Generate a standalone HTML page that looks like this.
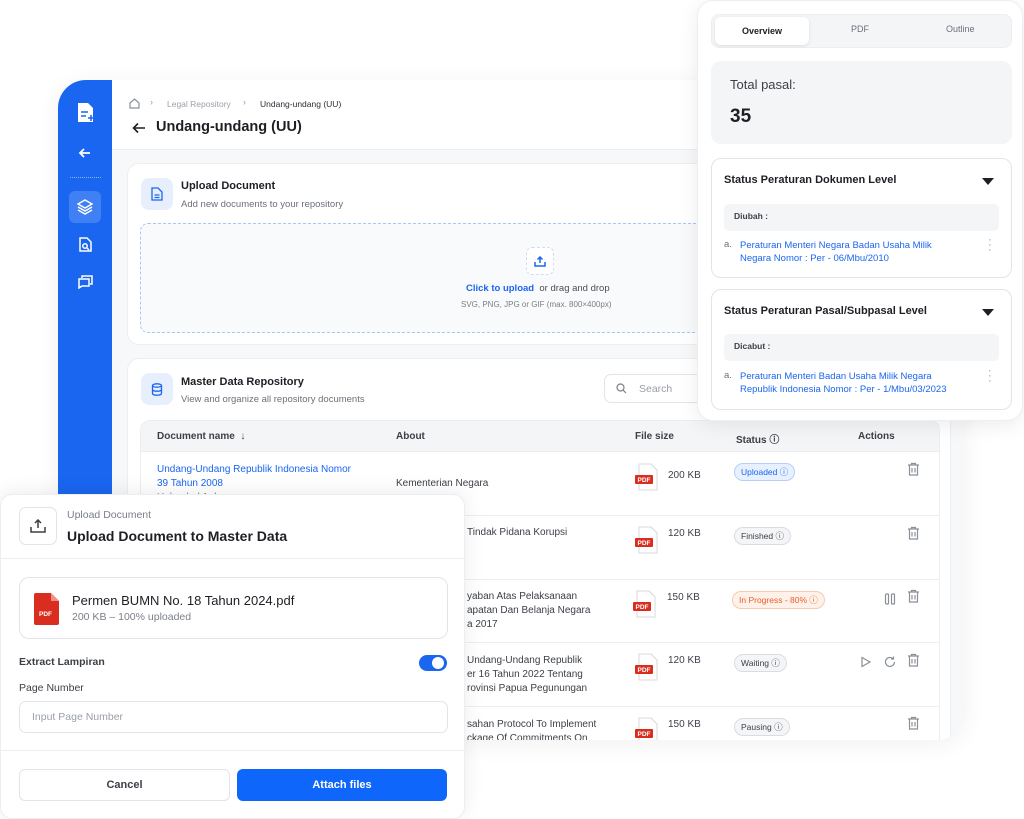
<!DOCTYPE html>
<html><head><meta charset="utf-8"><style>
*{box-sizing:border-box;margin:0;padding:0}
body{width:1024px;height:819px;overflow:hidden;background:#fff;font-family:"Liberation Sans",sans-serif;position:relative;color:#1d1f24}
.a{position:absolute}
.win{left:58px;top:80px;width:907px;height:660px;border-radius:28px;background:#f7f8f9;overflow:hidden;box-shadow:0 4px 24px rgba(0,0,0,.06)}
.side{left:0;top:0;width:54px;height:660px;background:#1a66f0}
.hdr{left:54px;top:0;right:0;height:70px;background:#fff;border-bottom:1px solid #eceef1}
.card{background:#fff;border:1px solid #eceef1;border-radius:12px}
.ico{width:32px;height:32px;border-radius:8px;background:#e7effd;display:flex;align-items:center;justify-content:center}
.t13{font-size:11px;font-weight:bold;color:#1d1f24}
.sub{font-size:9.5px;color:#6b7079}
.th{font-size:10px;color:#3b3f46;font-weight:bold}
.row{left:0;width:798px;height:64px;border-top:1px solid #eceef1;background:#fff}
.cell{position:absolute;font-size:10px;color:#3b3f46;line-height:14px;white-space:nowrap}
.pdf{position:absolute;width:22px;height:26px}
.badge{position:absolute;font-size:8.5px;border-radius:10px;padding:2px 6px;border:1px solid #d9dce1;background:#f4f5f7;color:#3b3f46}
.trash{position:absolute}
.panel{left:697px;top:0;width:326px;height:421px;background:#fff;border-radius:16px;box-shadow:0 4px 20px rgba(0,0,0,.08);border:1px solid #eceef1}
.modal{left:0;top:494px;width:465px;height:325px;background:#fff;border-radius:12px;box-shadow:0 -2px 20px rgba(0,0,0,.08);border:1px solid #eceef1}
.link{color:#1a66f0}
</style></head><body>

<div class="a win">
 <div class="a side">
  <svg class="a" style="left:18px;top:22px" width="20" height="22" viewBox="0 0 20 22"><path d="M2 1h10l5 5v14H2z" fill="#fff"/><path d="M5 10h7M5 14h5" stroke="#1a66f0" stroke-width="1.6"/><path d="M15 13v6M12 16h6" stroke="#1a66f0" stroke-width="1.6"/></svg>
  <svg class="a" style="left:20px;top:67px" width="14" height="12" viewBox="0 0 14 12"><path d="M12 6H2M6 2L2 6l4 4" stroke="#fff" stroke-width="1.8" fill="none"/></svg>
  <div class="a" style="left:12px;top:97px;width:31px;border-top:1px dotted #8fb3f7"></div>
  <div class="a" style="left:11px;top:111px;width:32px;height:32px;border-radius:6px;background:#3f80f4"></div>
  <svg class="a" style="left:19px;top:119px" width="16" height="16" viewBox="0 0 16 16" fill="none" stroke="#fff" stroke-width="1.5"><path d="M8 1l7 4-7 4-7-4z"/><path d="M1 8l7 4 7-4M1 11l7 4 7-4"/></svg>
  <svg class="a" style="left:21px;top:157px" width="13" height="15" viewBox="0 0 13 15" fill="none" stroke="#fff" stroke-width="1.5"><path d="M1 1h7l4 4v9H1z"/><circle cx="6" cy="9" r="2.2"/><path d="M8 11l2 2"/></svg>
  <svg class="a" style="left:20px;top:195px" width="15" height="14" viewBox="0 0 15 14" fill="none" stroke="#fff" stroke-width="1.5"><path d="M4 3V1h10v8h-2"/><path d="M1 4h10v7H4l-3 2z"/></svg>
 </div>
 <div class="a hdr">
  <svg class="a" style="left:17px;top:18px" width="11" height="11" viewBox="0 0 11 11" fill="none" stroke="#8a8f98" stroke-width="1.2"><path d="M1 5l4.5-4L10 5v5H1z"/></svg>
  <div class="a" style="left:38px;top:17px;font-size:9px;color:#9a9fa7">›</div>
  <div class="a" style="left:55px;top:19px;font-size:8.5px;color:#9a9fa7">Legal Repository</div>
  <div class="a" style="left:131px;top:17px;font-size:9px;color:#9a9fa7">›</div>
  <div class="a" style="left:148px;top:19px;font-size:8.5px;color:#2b2e34">Undang-undang (UU)</div>
  <svg class="a" style="left:20px;top:42px" width="14" height="12" viewBox="0 0 14 12"><path d="M13 6H2M6 1.5L1.5 6 6 10.5" stroke="#1d1f24" stroke-width="1.6" fill="none"/></svg>
  <div class="a" style="left:44px;top:39px;font-size:14.5px;font-weight:bold;color:#1d1f24">Undang-undang (UU)</div>
 </div>

 <div class="a card" style="left:69px;top:83px;width:840px;height:182px">
  <div class="a ico" style="left:13px;top:14px"><svg width="12" height="14" viewBox="0 0 12 14" fill="none" stroke="#1a66f0" stroke-width="1.3"><path d="M1 1h6l4 4v8H1z"/><path d="M3.5 8h5M3.5 10.5h5"/></svg></div>
  <div class="a t13" style="left:53px;top:16px">Upload Document</div>
  <div class="a sub" style="left:53px;top:35px">Add new documents to your repository</div>
  <div class="a" style="left:12px;top:59px;width:840px;height:110px;border:1px dashed #a9c6f8;border-radius:8px;background:#f9fafb"></div>
  <div class="a" style="left:398px;top:83px;width:28px;height:28px;border:1px dashed #cfdcf5;border-radius:6px;background:#fff;display:flex;align-items:center;justify-content:center"><svg width="12" height="11" viewBox="0 0 12 11" fill="none" stroke="#1a66f0" stroke-width="1.5"><path d="M6 7V1M3.5 3.5L6 1l2.5 2.5M1 6v4h10V6"/></svg></div>
  <div class="a" style="left:338px;top:119px;font-size:9.5px;color:#4b4f57"><b class="link">Click to upload</b>&nbsp; or drag and drop</div>
  <div class="a" style="left:333px;top:136px;font-size:8px;color:#7b8088">SVG, PNG, JPG or GIF (max. 800×400px)</div>
 </div>

 <div class="a card" style="left:69px;top:278px;width:824px;height:420px;border-radius:12px 12px 0 0">
  <div class="a ico" style="left:13px;top:14px"><svg width="12" height="13" viewBox="0 0 12 13" fill="none" stroke="#1a66f0" stroke-width="1.3"><ellipse cx="6" cy="2.5" rx="4.5" ry="1.7"/><path d="M1.5 2.5v8c0 1 2 1.7 4.5 1.7s4.5-.7 4.5-1.7v-8M1.5 6.5c0 1 2 1.7 4.5 1.7s4.5-.7 4.5-1.7"/></svg></div>
  <div class="a t13" style="left:53px;top:17px">Master Data Repository</div>
  <div class="a sub" style="left:53px;top:35px">View and organize all repository documents</div>
  <div class="a" style="left:476px;top:15px;width:120px;height:29px;border:1px solid #e1e4e8;border-radius:7px"></div>
  <svg class="a" style="left:488px;top:24px" width="11" height="11" viewBox="0 0 11 11" fill="none" stroke="#7b8088" stroke-width="1.2"><circle cx="4.5" cy="4.5" r="3.5"/><path d="M7.2 7.2L10 10"/></svg>
  <div class="a" style="left:511px;top:24px;font-size:10.5px;color:#9a9fa7">Search</div>

  <div class="a" style="left:12px;top:61px;width:800px;height:360px;border:1px solid #eceef1;border-radius:10px 10px 0 0;overflow:hidden;background:#fff">
   <div class="a" style="left:0;top:0;width:800px;height:30px;background:#f4f5f7"></div>
   <div class="a th" style="left:16px;top:10px">Document name &nbsp;↓</div>
   <div class="a th" style="left:255px;top:10px">About</div>
   <div class="a th" style="left:494px;top:10px">File size</div>
   <div class="a th" style="left:595px;top:10px">Status ⓘ</div>
   <div class="a th" style="left:717px;top:10px">Actions</div>

   <div class="a row" style="top:30px">
    <div class="cell link" style="left:16px;top:11px">Undang-Undang Republik Indonesia Nomor<br>39 Tahun 2008</div>
    <div class="cell" style="left:16px;top:39px;color:#7b8088">Uploaded 1 day ago</div>
    <div class="cell" style="left:255px;top:25px">Kementerian Negara</div>
    <div class="pdf" style="left:494px;top:11px"><svg width="24" height="28" viewBox="0 0 24 28"><path d="M4 1h12l6 6v20H4z" fill="#fff" stroke="#d5d8dd"/><rect x="0" y="12" width="18" height="9" rx="1" fill="#d92d20"/><text x="2.5" y="19" font-size="6.5" font-weight="bold" fill="#fff" font-family="Liberation Sans">PDF</text></svg></div>
    <div class="cell" style="left:527px;top:17px">200 KB</div>
    <div class="badge" style="left:593px;top:11px;background:#e7f0fe;border-color:#b6cef8;color:#1a66f0">Uploaded ⓘ</div>
   </div>
   <div class="a row" style="top:94px">
    <div class="cell" style="left:326px;top:10px">Tindak Pidana Korupsi</div>
    <div class="pdf" style="left:494px;top:10px"><svg width="24" height="28" viewBox="0 0 24 28"><path d="M4 1h12l6 6v20H4z" fill="#fff" stroke="#d5d8dd"/><rect x="0" y="12" width="18" height="9" rx="1" fill="#d92d20"/><text x="2.5" y="19" font-size="6.5" font-weight="bold" fill="#fff" font-family="Liberation Sans">PDF</text></svg></div>
    <div class="cell" style="left:527px;top:11px">120 KB</div>
    <div class="badge" style="left:593px;top:11px">Finished ⓘ</div>
   </div>
   <div class="a row" style="top:158px">
    <div class="cell" style="left:326px;top:10px">yaban Atas Pelaksanaan<br>apatan Dan Belanja Negara<br>a 2017</div>
    <div class="pdf" style="left:492px;top:10px"><svg width="24" height="28" viewBox="0 0 24 28"><path d="M4 1h12l6 6v20H4z" fill="#fff" stroke="#d5d8dd"/><rect x="0" y="12" width="18" height="9" rx="1" fill="#d92d20"/><text x="2.5" y="19" font-size="6.5" font-weight="bold" fill="#fff" font-family="Liberation Sans">PDF</text></svg></div>
    <div class="cell" style="left:526px;top:11px">150 KB</div>
    <div class="badge" style="left:591px;top:11px;background:#fef1ea;border-color:#f8c9ad;color:#e8602a">In Progress - 80% ⓘ</div>
    <svg class="trash" style="left:743px;top:13px" width="12" height="12" viewBox="0 0 12 12" fill="none" stroke="#8a8f98" stroke-width="1.2"><rect x="1.5" y="1" width="3" height="10" rx="1"/><rect x="7.5" y="1" width="3" height="10" rx="1"/></svg>
   </div>
   <div class="a row" style="top:221px">
    <div class="cell" style="left:326px;top:11px">Undang-Undang Republik<br>er 16 Tahun 2022 Tentang<br>rovinsi Papua Pegunungan</div>
    <div class="pdf" style="left:494px;top:10px"><svg width="24" height="28" viewBox="0 0 24 28"><path d="M4 1h12l6 6v20H4z" fill="#fff" stroke="#d5d8dd"/><rect x="0" y="12" width="18" height="9" rx="1" fill="#d92d20"/><text x="2.5" y="19" font-size="6.5" font-weight="bold" fill="#fff" font-family="Liberation Sans">PDF</text></svg></div>
    <div class="cell" style="left:527px;top:11px">120 KB</div>
    <div class="badge" style="left:593px;top:11px">Waiting ⓘ</div>
    <svg class="trash" style="left:719px;top:13px" width="12" height="12" viewBox="0 0 12 12" fill="none" stroke="#8a8f98" stroke-width="1.2"><path d="M2 1.5l8 4.5-8 4.5z"/></svg>
    <svg class="trash" style="left:743px;top:13px" width="12" height="12" viewBox="0 0 12 12" fill="none" stroke="#8a8f98" stroke-width="1.2"><path d="M10.5 6A4.5 4.5 0 1 1 9 2.6M9.5 0.5v2.5H7"/></svg>
   </div>
   <div class="a row" style="top:285px">
    <div class="cell" style="left:326px;top:11px">sahan Protocol To Implement<br>ckage Of Commitments On</div>
    <div class="pdf" style="left:494px;top:10px"><svg width="24" height="28" viewBox="0 0 24 28"><path d="M4 1h12l6 6v20H4z" fill="#fff" stroke="#d5d8dd"/><rect x="0" y="12" width="18" height="9" rx="1" fill="#d92d20"/><text x="2.5" y="19" font-size="6.5" font-weight="bold" fill="#fff" font-family="Liberation Sans">PDF</text></svg></div>
    <div class="cell" style="left:527px;top:11px">150 KB</div>
    <div class="badge" style="left:593px;top:11px">Pausing ⓘ</div>
   </div>
  </div>
 </div>
</div>
<svg class="a" style="left:907px;top:462px" width="13" height="14" viewBox="0 0 13 14" fill="none" stroke="#8a8f98" stroke-width="1.2"><path d="M1 3h11M4.5 3V1.5h4V3M2.5 3v10h8V3M5 6v4.5M8 6v4.5"/></svg>
<svg class="a" style="left:907px;top:526px" width="13" height="14" viewBox="0 0 13 14" fill="none" stroke="#8a8f98" stroke-width="1.2"><path d="M1 3h11M4.5 3V1.5h4V3M2.5 3v10h8V3M5 6v4.5M8 6v4.5"/></svg>
<svg class="a" style="left:907px;top:589px" width="13" height="14" viewBox="0 0 13 14" fill="none" stroke="#8a8f98" stroke-width="1.2"><path d="M1 3h11M4.5 3V1.5h4V3M2.5 3v10h8V3M5 6v4.5M8 6v4.5"/></svg>
<svg class="a" style="left:907px;top:653px" width="13" height="14" viewBox="0 0 13 14" fill="none" stroke="#8a8f98" stroke-width="1.2"><path d="M1 3h11M4.5 3V1.5h4V3M2.5 3v10h8V3M5 6v4.5M8 6v4.5"/></svg>
<svg class="a" style="left:907px;top:716px" width="13" height="14" viewBox="0 0 13 14" fill="none" stroke="#8a8f98" stroke-width="1.2"><path d="M1 3h11M4.5 3V1.5h4V3M2.5 3v10h8V3M5 6v4.5M8 6v4.5"/></svg>

<div class="a panel">
 <div class="a" style="left:13px;top:13px;width:301px;height:34px;background:#f4f5f7;border-radius:8px;border:1px solid #eceef1"></div>
 <div class="a" style="left:17px;top:16px;width:94px;height:28px;background:#fff;border-radius:6px;box-shadow:0 1px 3px rgba(0,0,0,.1);font-size:9px;font-weight:bold;text-align:center;line-height:28px">Overview</div>
 <div class="a" style="left:153px;top:23px;font-size:9px;color:#6b7079">PDF</div>
 <div class="a" style="left:248px;top:23px;font-size:9px;color:#6b7079">Outline</div>
 <div class="a" style="left:13px;top:60px;width:301px;height:83px;background:#f4f5f7;border-radius:10px"></div>
 <div class="a" style="left:32px;top:76px;font-size:13px;color:#3b3f46">Total pasal:</div>
 <div class="a" style="left:32px;top:105px;font-size:19px;font-weight:bold">35</div>

 <div class="a" style="left:13px;top:157px;width:301px;height:120px;border:1px solid #e1e4e8;border-radius:10px"></div>
 <div class="a" style="left:26px;top:173px;font-size:11px;font-weight:bold">Status Peraturan Dokumen Level</div>
 <svg class="a" style="left:284px;top:177px" width="12" height="7"><path d="M0 0h12L6 7z" fill="#1d1f24"/></svg>
 <div class="a" style="left:26px;top:203px;width:275px;height:27px;background:#f4f5f7;border-radius:5px;font-size:8.5px;font-weight:bold;color:#3b3f46;padding:7px 0 0 10px">Diubah :</div>
 <div class="a" style="left:26px;top:238px;font-size:9.5px;color:#6b7079">a.</div>
 <div class="a link" style="left:42px;top:238px;font-size:9.5px;line-height:13px">Peraturan Menteri Negara Badan Usaha Milik<br>Negara Nomor : Per - 06/Mbu/2010</div>
 <div class="a" style="left:290px;top:237px;font-size:11px;color:#8a8f98;line-height:5px">·<br>·<br>·</div>

 <div class="a" style="left:13px;top:288px;width:301px;height:121px;border:1px solid #e1e4e8;border-radius:10px"></div>
 <div class="a" style="left:26px;top:304px;font-size:11px;font-weight:bold">Status Peraturan Pasal/Subpasal Level</div>
 <svg class="a" style="left:284px;top:308px" width="12" height="7"><path d="M0 0h12L6 7z" fill="#1d1f24"/></svg>
 <div class="a" style="left:26px;top:333px;width:275px;height:27px;background:#f4f5f7;border-radius:5px;font-size:8.5px;font-weight:bold;color:#3b3f46;padding:7px 0 0 10px">Dicabut :</div>
 <div class="a" style="left:26px;top:369px;font-size:9.5px;color:#6b7079">a.</div>
 <div class="a link" style="left:42px;top:369px;font-size:9.5px;line-height:13px">Peraturan Menteri Badan Usaha Milik Negara<br>Republik Indonesia Nomor : Per - 1/Mbu/03/2023</div>
 <div class="a" style="left:290px;top:368px;font-size:11px;color:#8a8f98;line-height:5px">·<br>·<br>·</div>
</div>

<div class="a modal">
 <div class="a" style="left:18px;top:12px;width:38px;height:38px;border:1px solid #e1e4e8;border-radius:7px;display:flex;align-items:center;justify-content:center"><svg width="16" height="14" viewBox="0 0 16 14" fill="none" stroke="#3b3f46" stroke-width="1.5"><path d="M8 9V1M5 4l3-3 3 3M1 8v5h14V8"/></svg></div>
 <div class="a" style="left:66px;top:14px;font-size:10.5px;color:#7b8088">Upload Document</div>
 <div class="a" style="left:66px;top:33px;font-size:14px;font-weight:bold;color:#1d1f24">Upload Document to Master Data</div>
 <div class="a" style="left:0;top:63px;width:465px;border-top:1px solid #eceef1"></div>
 <div class="a" style="left:18px;top:82px;width:429px;height:62px;border:1px solid #e1e4e8;border-radius:10px"></div>
 <svg class="a" style="left:33px;top:98px" width="26" height="32" viewBox="0 0 26 32"><path d="M2 0h15l8 8v22a2 2 0 0 1-2 2H2a2 2 0 0 1-2-2V2a2 2 0 0 1 2-2z" fill="#d92d20"/><path d="M17 0v8h8" fill="#f08f88"/><text x="5" y="23" font-size="6.5" font-weight="bold" fill="#fff" font-family="Liberation Sans">PDF</text></svg>
 <div class="a" style="left:71px;top:98px;font-size:13px;color:#1d1f24">Permen BUMN No. 18 Tahun 2024.pdf</div>
 <div class="a" style="left:71px;top:116px;font-size:10.5px;color:#7b8088">200 KB – 100% uploaded</div>
 <div class="a" style="left:18px;top:161px;font-size:10.5px;font-weight:bold;color:#3b3f46">Extract Lampiran</div>
 <div class="a" style="left:418px;top:160px;width:28px;height:16px;border-radius:8px;background:#1a66f0"></div>
 <div class="a" style="left:431px;top:162px;width:12px;height:12px;border-radius:6px;background:#fff"></div>
 <div class="a" style="left:18px;top:187px;font-size:10.5px;color:#3b3f46">Page Number</div>
 <div class="a" style="left:18px;top:206px;width:429px;height:32px;border:1px solid #e1e4e8;border-radius:7px;font-size:10.5px;color:#9a9fa7;padding:9px 0 0 12px">Input Page Number</div>
 <div class="a" style="left:0;top:255px;width:465px;border-top:1.5px solid #eceef1"></div>
 <div class="a" style="left:18px;top:274px;width:211px;height:32px;border:1px solid #e1e4e8;border-radius:6px;font-size:11px;font-weight:bold;color:#3b3f46;text-align:center;line-height:30px">Cancel</div>
 <div class="a" style="left:236px;top:274px;width:210px;height:32px;background:#0f66fa;border-radius:6px;font-size:11px;font-weight:bold;color:#fff;text-align:center;line-height:32px">Attach files</div>
</div>
</body></html>
